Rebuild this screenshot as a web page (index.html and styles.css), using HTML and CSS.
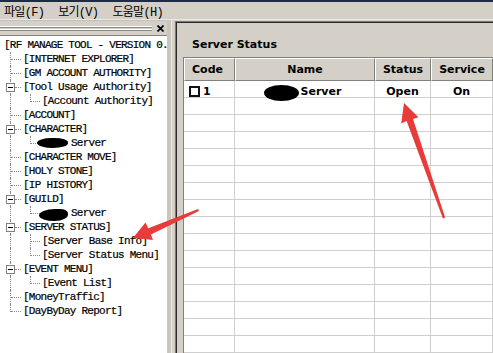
FILE: index.html
```html
<!DOCTYPE html>
<html lang="ko">
<head>
<meta charset="utf-8">
<title>RF Manage Tool</title>
<link rel="stylesheet" href="styles.css">
</head>
<body>
<div class="app">
  <div class="titlebar"></div>
  <div class="menubar">
    <span class="menu">파일(F)</span>
    <span class="menu">보기(V)</span>
    <span class="menu">도움말(H)</span>
  </div>
  <div class="main">
    <div class="leftpane">
      <div class="dockhead">
        <div class="grip"><i></i><i></i></div>
        <svg class="close" width="7" height="7" viewBox="0 0 7 7"><path d="M0.5 0.5L6.5 6.5M6.5 0.5L0.5 6.5" stroke="#000" stroke-width="1.7"/></svg>
      </div>
      <div class="tree">
        <div class="node"><span class="lbl root">[RF MANAGE TOOL - VERSION 0.01]</span></div>
        <div class="node"><span class="tee"><i></i></span><span class="lbl">[INTERNET EXPLORER]</span></div>
        <div class="node"><span class="tee"><i></i></span><span class="lbl">[GM ACCOUNT AUTHORITY]</span></div>
        <div class="node"><span class="tee"><b class="box"></b><i class="short"></i></span><span class="lbl">[Tool Usage Authority]</span></div>
        <div class="node"><span class="pipe"></span><span class="tee sub end"><i></i></span><span class="lbl">[Account Authority]</span></div>
        <div class="node"><span class="tee"><i></i></span><span class="lbl">[ACCOUNT]</span></div>
        <div class="node"><span class="tee"><b class="box"></b><i class="short"></i></span><span class="lbl">[CHARACTER]</span></div>
        <div class="node"><span class="pipe"></span><span class="tee sub end"><i></i></span><span class="redact r1"></span><span class="lbl srv">Server</span></div>
        <div class="node"><span class="tee"><i></i></span><span class="lbl">[CHARACTER MOVE]</span></div>
        <div class="node"><span class="tee"><i></i></span><span class="lbl">[HOLY STONE]</span></div>
        <div class="node"><span class="tee"><i></i></span><span class="lbl">[IP HISTORY]</span></div>
        <div class="node"><span class="tee"><b class="box"></b><i class="short"></i></span><span class="lbl">[GUILD]</span></div>
        <div class="node"><span class="pipe"></span><span class="tee sub end"><i></i></span><span class="redact r2"></span><span class="lbl srv">Server</span></div>
        <div class="node"><span class="tee"><b class="box"></b><i class="short"></i></span><span class="lbl">[SERVER STATUS]</span></div>
        <div class="node"><span class="pipe"></span><span class="tee sub"><i></i></span><span class="lbl">[Server Base Info]</span></div>
        <div class="node"><span class="pipe"></span><span class="tee sub end"><i></i></span><span class="lbl">[Server Status Menu]</span></div>
        <div class="node"><span class="tee"><b class="box"></b><i class="short"></i></span><span class="lbl">[EVENT MENU]</span></div>
        <div class="node"><span class="pipe"></span><span class="tee sub end"><i></i></span><span class="lbl">[Event List]</span></div>
        <div class="node"><span class="tee"><i></i></span><span class="lbl">[MoneyTraffic]</span></div>
        <div class="node"><span class="tee end"><i></i></span><span class="lbl">[DayByDay Report]</span></div>
      </div>
    </div>
    <div class="splitter"></div>
    <div class="rightpane">
      <div class="frame">
        <div class="caption">Server Status</div>
        <div class="listview">
          <div class="lv-row lv-head">
            <div class="hc left">Code</div>
            <div class="hc">Name</div>
            <div class="hc">Status</div>
            <div class="hc">Service</div>
            <div class="hc"></div>
          </div>
          <div class="lv-row">
            <div class="c code"><span class="check"></span>1</div>
            <div class="c name"><span class="redact r3"></span>Server</div>
            <div class="c">Open</div>
            <div class="c">On</div>
            <div class="c"></div>
          </div>
          <div class="lv-row"><div class="c"></div><div class="c"></div><div class="c"></div><div class="c"></div><div class="c"></div></div>
          <div class="lv-row"><div class="c"></div><div class="c"></div><div class="c"></div><div class="c"></div><div class="c"></div></div>
          <div class="lv-row"><div class="c"></div><div class="c"></div><div class="c"></div><div class="c"></div><div class="c"></div></div>
          <div class="lv-row"><div class="c"></div><div class="c"></div><div class="c"></div><div class="c"></div><div class="c"></div></div>
          <div class="lv-row"><div class="c"></div><div class="c"></div><div class="c"></div><div class="c"></div><div class="c"></div></div>
          <div class="lv-row"><div class="c"></div><div class="c"></div><div class="c"></div><div class="c"></div><div class="c"></div></div>
          <div class="lv-row"><div class="c"></div><div class="c"></div><div class="c"></div><div class="c"></div><div class="c"></div></div>
          <div class="lv-row"><div class="c"></div><div class="c"></div><div class="c"></div><div class="c"></div><div class="c"></div></div>
          <div class="lv-row"><div class="c"></div><div class="c"></div><div class="c"></div><div class="c"></div><div class="c"></div></div>
          <div class="lv-row"><div class="c"></div><div class="c"></div><div class="c"></div><div class="c"></div><div class="c"></div></div>
          <div class="lv-row"><div class="c"></div><div class="c"></div><div class="c"></div><div class="c"></div><div class="c"></div></div>
          <div class="lv-row"><div class="c"></div><div class="c"></div><div class="c"></div><div class="c"></div><div class="c"></div></div>
          <div class="lv-row"><div class="c"></div><div class="c"></div><div class="c"></div><div class="c"></div><div class="c"></div></div>
          <div class="lv-row"><div class="c"></div><div class="c"></div><div class="c"></div><div class="c"></div><div class="c"></div></div>
          <div class="lv-row"><div class="c"></div><div class="c"></div><div class="c"></div><div class="c"></div><div class="c"></div></div>
        </div>
      </div>
    </div>
  </div>
  <svg class="annot" width="493" height="353" viewBox="0 0 493 353">
    <polygon points="133,238 153,240 150.9,234.6 199,211.1 198,208.9 148.3,228.3 145.5,222.4" fill="#e83c3a"/>
    <polygon points="404,103 418.4,117.2 413,119 445.1,217.6 442.9,218.4 406.6,121.1 401.2,123.6" fill="#e83c3a"/>
  </svg>
</div>
</body>
</html>
```

FILE: styles.css
```css
html, body {
  margin: 0;
  padding: 0;
}
body {
  width: 493px;
  height: 353px;
  overflow: hidden;
  background: #d4d0c8;
}
.app {
  position: relative;
  width: 493px;
  height: 353px;
  overflow: hidden;
  display: flex;
  flex-direction: column;
  background: #d4d0c8;
}
.titlebar {
  height: 2px;
  background: #1e2b47;
  flex: none;
}
.menubar {
  height: 18px;
  flex: none;
  display: flex;
  align-items: center;
  gap: 14px;
  padding-left: 4px;
  box-sizing: border-box;
  border-bottom: 1px solid #ebe9e4;
  font: 12px "Liberation Mono", "Noto Sans CJK KR", monospace;
  letter-spacing: -0.7px;
  color: #000;
}
.main {
  flex: 1;
  display: flex;
  min-height: 0;
}
.leftpane {
  width: 167px;
  flex: none;
  display: flex;
  flex-direction: column;
}
.dockhead {
  height: 15px;
  flex: none;
  display: flex;
  align-items: center;
  box-sizing: border-box;
  border-top: 1px solid #c4c0b8;
}
.grip {
  width: 152px;
  display: flex;
  flex-direction: column;
  gap: 1px;
}
.grip i {
  display: block;
  height: 0;
  border-top: 1px solid #ffffff;
  border-bottom: 1px solid #8c8a84;
}
.close {
  margin-left: 5px;
  display: block;
}
.tree {
  flex: 1;
  background: #fff;
  border-top: 1px solid #808080;
  padding-top: 2px;
  overflow: hidden;
  font: 11px "Liberation Mono", monospace;
  letter-spacing: -0.75px;
  color: #000;
  -webkit-text-stroke: 0.2px #000;
}
.node {
  height: 14px;
  display: flex;
  align-items: center;
  white-space: nowrap;
}
.lbl {
  line-height: 14px;
}
.root {
  padding-left: 4px;
}
.tee {
  flex: none;
  box-sizing: border-box;
  width: 13px;
  height: 14px;
  margin-left: 10px;
  border-left: 1px dotted #8a8a8a;
  display: flex;
  align-items: center;
  align-self: flex-start;
}
.tee i {
  display: block;
  width: 10px;
  height: 0;
  border-top: 1px dotted #8a8a8a;
}
.tee.end {
  height: 8px;
  align-items: flex-end;
}
.tee.sub {
  width: 12px;
}
.tee.sub i {
  width: 9px;
}
.tee .short {
  width: 6px;
}
.box {
  flex: none;
  box-sizing: border-box;
  width: 9px;
  height: 9px;
  margin-left: -5px;
  border: 1px solid #808080;
  background: #fff;
  display: flex;
  align-items: center;
  justify-content: center;
}
.box::before {
  content: "";
  width: 5px;
  height: 1px;
  background: #000;
}
.pipe {
  flex: none;
  box-sizing: border-box;
  width: 10px;
  height: 14px;
  margin-left: 10px;
  border-left: 1px dotted #8a8a8a;
  align-self: flex-start;
}
.redact {
  display: inline-block;
  flex: none;
  background: #000;
}
.r1 {
  width: 31px;
  height: 10px;
  margin-left: -5px;
  border-radius: 50% 45% 50% 55%;
}
.r2 {
  width: 29px;
  height: 12px;
  margin-left: -3px;
  margin-top: 4px;
  border-radius: 60% 30% 50% 60% / 60% 40% 60% 50%;
}
.srv {
  margin-left: 3px;
}
.splitter {
  width: 8px;
  flex: none;
  background: linear-gradient(to right, #cac6be 0 4px, #eeece6 4px 5px, #d4d0c8 5px 8px);
}
.rightpane {
  flex: 1;
  min-width: 0;
  padding-top: 1px;
  display: flex;
}
.frame {
  flex: 1;
  display: flex;
  flex-direction: column;
  border-top: 1px solid #7a7a7a;
  border-left: 1px solid #7a7a7a;
  box-shadow: inset 1px 1px 0 #2a2a2a;
  padding: 1px 0 0 1px;
  overflow: hidden;
}
.caption {
  margin: 15px 0 0 15px;
  line-height: 14px;
  height: 14px;
  font: bold 11px "DejaVu Sans", sans-serif;
  color: #000;
}
.listview {
  flex: 1;
  margin: 5px 0 0 6px;
  background: #fff;
  border-top: 1px solid #808080;
  border-left: 1px solid #808080;
  overflow: hidden;
  font: bold 11px "DejaVu Sans", sans-serif;
  color: #000;
}
.lv-row {
  display: grid;
  grid-template-columns: 51px 140px 56px 62px 200px;
  height: 17px;
  box-sizing: border-box;
  border-bottom: 1px solid #cfcfcf;
}
.lv-head {
  height: 23px;
  border-bottom: none;
}
.hc {
  box-sizing: border-box;
  background: #d4d0c8;
  border-top: 1px solid #fff;
  border-left: 1px solid #fff;
  border-right: 1px solid #808080;
  border-bottom: 1px solid #808080;
  display: flex;
  align-items: center;
  justify-content: center;
  white-space: nowrap;
}
.hc.left {
  justify-content: flex-start;
  padding-left: 7px;
}
.c {
  box-sizing: border-box;
  border-right: 1px solid #cfcfcf;
  display: flex;
  align-items: center;
  justify-content: center;
  white-space: nowrap;
}
.c.code {
  justify-content: flex-start;
  padding-left: 5px;
}
.check {
  display: inline-block;
  box-sizing: border-box;
  width: 11px;
  height: 11px;
  border: 2px solid #111;
  margin-right: 3px;
}
.c.name {
  padding-right: 4px;
}
.r3 {
  width: 35px;
  height: 16px;
  margin-top: 4px;
  margin-right: 2px;
  border-radius: 50%;
}
.annot {
  position: absolute;
  left: 0;
  top: 0;
  pointer-events: none;
}
```
